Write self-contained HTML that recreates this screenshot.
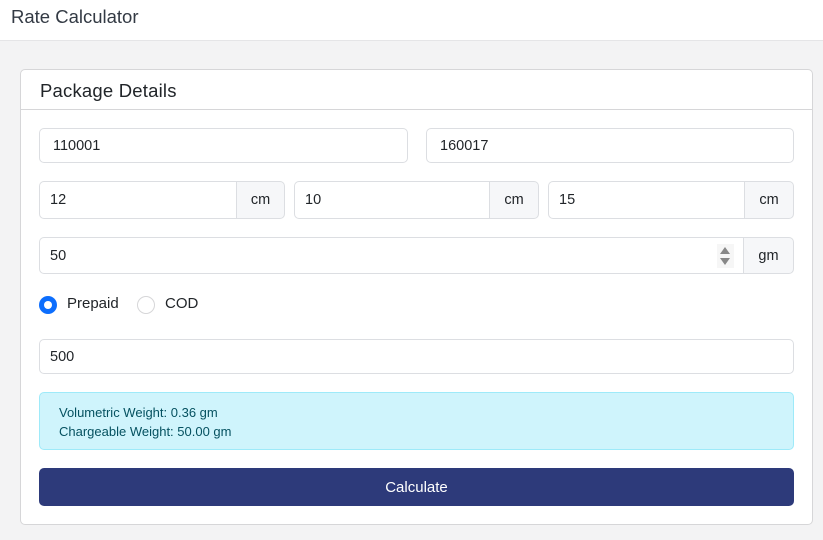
<!DOCTYPE html>
<html><head><style>
*{box-sizing:border-box;margin:0;padding:0}
body{width:823px;height:540px;background:#f3f3f4;font-family:"Liberation Sans",sans-serif;color:#212529;position:relative;overflow:hidden}
.a{position:absolute}
.hdr{left:0;top:0;width:823px;height:41px;background:#fff;border-bottom:1px solid #e5e5e7}
.hdr span{position:absolute;left:11px;top:6px;font-size:18.5px;color:#333a44}
.card{left:20px;top:69px;width:793px;height:456px;background:#fff;border:1px solid #d6d6d8;border-radius:5px}
.ch{left:0;top:0;width:791px;height:40px;border-bottom:1px solid #d6d6d8}
.ch span{position:absolute;left:19px;top:10px;font-size:18.5px;color:#212529;letter-spacing:0.2px}
.in{border:1px solid #dcdee2;border-radius:5px;background:#fff;font-size:14.5px;padding-left:13px;display:flex;align-items:center}
.ad{border:1px solid #dcdee2;border-radius:0 5px 5px 0;background:#f6f7f9;font-size:14.5px;display:flex;align-items:center;justify-content:center}
.l{border-radius:5px 0 0 5px;border-right:none}
</style></head><body>
<div class="a hdr"><span>Rate Calculator</span></div>
<div class="a card"><div class="a ch"><span>Package Details</span></div></div>
<div class="a in" style="left:39px;top:128px;width:369px;height:35px">110001</div>
<div class="a in" style="left:426px;top:128px;width:368px;height:35px">160017</div>
<div class="a in l" style="left:39px;top:181px;width:197px;height:38px;padding-left:10px">12</div>
<div class="a ad" style="left:236px;top:181px;width:49px;height:38px">cm</div>
<div class="a in l" style="left:294px;top:181px;width:195px;height:38px;padding-left:10px">10</div>
<div class="a ad" style="left:489px;top:181px;width:50px;height:38px">cm</div>
<div class="a in l" style="left:548px;top:181px;width:196px;height:38px;padding-left:10px">15</div>
<div class="a ad" style="left:744px;top:181px;width:50px;height:38px">cm</div>
<div class="a in l" style="left:39px;top:237px;width:704px;height:37px;padding-left:10px">50</div>
<div class="a" style="left:717px;top:244px;width:17px;height:24px;background:#f6f6f6"></div>
<svg class="a" style="left:717px;top:245px" width="16" height="22"><path d="M3 9 L8 2 L13 9Z M3 13 L8 20 L13 13Z" fill="#888"/></svg>
<div class="a ad" style="left:743px;top:237px;width:51px;height:37px">gm</div>
<div class="a" style="left:39px;top:296px;width:18px;height:18px;border-radius:50%;background:#0d6efd"></div>
<div class="a" style="left:44px;top:301px;width:8px;height:8px;border-radius:50%;background:#fff"></div>
<div class="a" style="left:67px;top:295px;font-size:15px">Prepaid</div>
<div class="a" style="left:137px;top:296px;width:18px;height:18px;border-radius:50%;border:1px solid #d6d6d8"></div>
<div class="a" style="left:165px;top:295px;font-size:15px">COD</div>
<div class="a in" style="left:39px;top:339px;width:755px;height:35px;padding-left:10px">500</div>
<div class="a" style="left:39px;top:392px;width:755px;height:58px;background:#cff4fc;border:1px solid #9eeaf9;border-radius:5px;color:#055160;font-size:13px;padding:10px 0 0 19px;line-height:19px">Volumetric Weight: 0.36 gm<br>Chargeable Weight: 50.00 gm</div>
<div class="a" style="left:39px;top:468px;width:755px;height:38px;background:#2d3a7a;border-radius:5px;color:#fff;font-size:15px;display:flex;align-items:center;justify-content:center">Calculate</div>
</body></html>
